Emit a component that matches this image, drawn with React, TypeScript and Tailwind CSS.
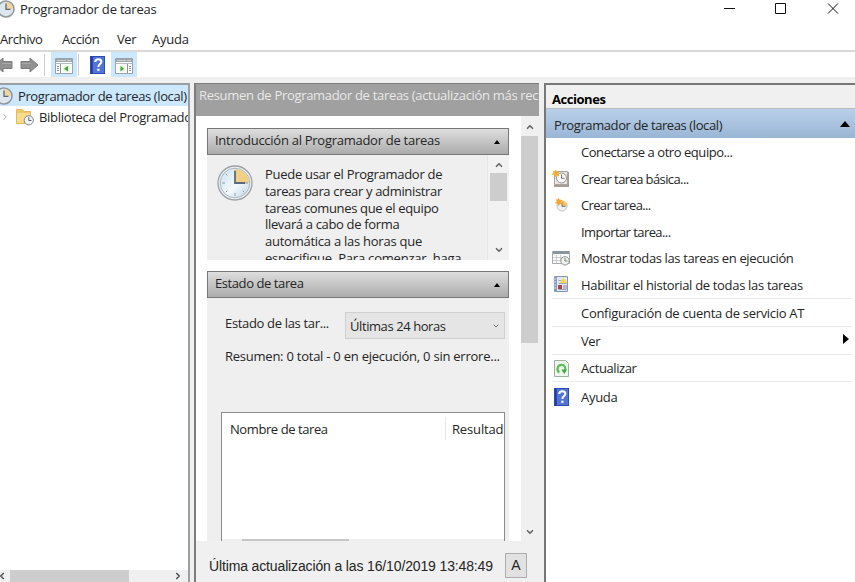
import type { ReactNode } from 'react';
import clsx from 'clsx';
import { ChevronDown, ChevronLeft, ChevronRight, ChevronUp } from 'lucide-react';

interface ActionItem {
  label: string;
  icon?: ReactNode;
  className: string;
  textClass: string;
  submenu?: boolean;
}

function ClockIcon({ className }: { className?: string }) {
  return (
    <svg viewBox="0 0 36 36" className={className}>
      <defs>
        <linearGradient id="face" x1="0" y1="0" x2="1" y2="1">
          <stop offset="0" stopColor="#c9dfef" />
          <stop offset="0.55" stopColor="#f4f9fc" />
          <stop offset="1" stopColor="#bdd2e2" />
        </linearGradient>
      </defs>
      <circle cx="18" cy="18" r="17" fill="#eef1f3" stroke="#9ba1a6" strokeWidth="1.3" />
      <circle cx="18" cy="18" r="14.8" fill="url(#face)" stroke="#a9b4bd" strokeWidth="1" />
      <path d="M18 18V4a14 14 0 0 1 14 14z" fill="#f1cf85" />
      <path d="M18 5v3M18 28v3M5 18h3M28 18h3M8.8 8.8l1.5 1.5M8.8 27.2l1.5-1.5M27.2 27.2l-1.5-1.5" stroke="#8b9daa" strokeWidth="1" />
      <path d="M18 6v12h10" fill="none" stroke="#5c6b7b" strokeWidth="1.8" />
    </svg>
  );
}

function SmallClock({ className }: { className?: string }) {
  return (
    <svg viewBox="0 0 18 18" className={className}>
      <circle cx="9" cy="9" r="8" fill="#dce7ef" stroke="#92989d" strokeWidth="1.6" />
      <path d="M9 9V2a7 7 0 0 1 7 7z" fill="#efd5a0" />
      <path d="M9 3.5V9.3h4.5" fill="none" stroke="#5d6872" strokeWidth="1.3" />
    </svg>
  );
}

function FolderClock() {
  return (
    <svg viewBox="0 0 18 18" className="h-[18px] w-[18px] shrink-0">
      <path d="M.5 1.5h6l1.5 2h6.5v12H.5z" fill="#efc964" stroke="#dfba60" />
      <path d="M1 5h13v10H1z" fill="#f8dc8b" />
      <circle cx="12.8" cy="12.3" r="4.6" fill="#eef3f6" stroke="#80888f" />
      <path d="M12.8 9.2v3.3h2.6" fill="none" stroke="#56616b" />
    </svg>
  );
}

function ArrowIcon({ flip }: { flip?: boolean }) {
  return (
    <svg viewBox="0 0 19 16" className={clsx('h-4 w-[19px] shrink-0', flip && '-scale-x-100')}>
      <path d="M1 4.5h9V1l8 7-8 7v-3.5H1z" fill="#919191" stroke="#7c7c7c" strokeWidth="1" />
      <path d="M2 6.5h9" stroke="#a8a8a8" />
    </svg>
  );
}

function PaneIcon({ right }: { right?: boolean }) {
  return (
    <svg viewBox="0 0 18 16" className="h-4 w-[18px]">
      <path d="M.5.5h17v15H.5z" fill="#fdfdfd" stroke="#9aa1a8" />
      <path d="M1 1h16v3H1z" fill="#9da5ad" />
      <path d="M2 2.5h9" stroke="#c9ced3" />
      <path d="M12.5 2.5h1M14.5 2.5h1" stroke="#fff" />
      <path d="M.5 5.5h17" stroke="#b5bbc1" />
      {right ? (
        <>
          <path d="M12.5 6v9" stroke="#8b939b" />
          <path d="M14 8.5h2M14 10.5h2M14 12.5h2" stroke="#8a929a" />
          <path d="M4.5 7.5h5v6h-5z" fill="#dff2d9" />
          <path d="m5.5 8 3.5 2.7-3.5 2.8z" fill="#45a53b" />
        </>
      ) : (
        <>
          <path d="M5.5 6v9" stroke="#8b939b" />
          <path d="M2 8.5h2M2 10.5h2M2 12.5h2" stroke="#8a929a" />
          <path d="M8.5 7.5h6v6h-6z" fill="#dff2d9" />
          <path d="M13 8 9 10.7l4 2.8z" fill="#45a53b" />
        </>
      )}
    </svg>
  );
}

function HelpIcon() {
  return (
    <svg viewBox="0 0 15 18" className="h-[18px] w-[15px]">
      <path d="M0 0h15v18H0z" fill="#2c4cb4" />
      <path d="M3 1h11v16H3z" fill="#5274d3" />
      <path d="M1.5 0v18" stroke="#223c98" />
      <path d="M5.2 5.9c0-3.7 6.2-3.5 6.2-.2 0 2.4-3 2.3-3 5.2" fill="none" stroke="#fff" strokeWidth="2" />
      <path d="M7.3 12.7h2.2v2.2H7.3z" fill="#fff" />
    </svg>
  );
}

function BasicTaskIcon() {
  return (
    <svg viewBox="0 0 18 18" className="h-[18px] w-[18px]">
      <path d="M2.5 1.5h13v13h-13z" fill="#eae6e5" stroke="#aaa4a2" />
      <path d="M2 15h13.5l.5-13h1v15H2z" fill="#a39c99" />
      <circle cx="9.5" cy="8" r="5" fill="#f7f7f7" stroke="#98938f" />
      <path d="M9.5 4.5V8.3h3" fill="none" stroke="#75716e" />
      <path d="m3.5 0 1.2 2 2.1-.3-1 2 1.2 2-2.5-.4L3 7l-.7-2L0 4.4l1.8-1.3L1.3 1l2 .6z" fill="#f6ad38" stroke="#f6ad38" strokeWidth=".6" />
    </svg>
  );
}

function TaskIcon() {
  return (
    <svg viewBox="0 0 13 14" className="h-[14px] w-[13px]">
      <circle cx="7" cy="8" r="5" fill="#eef1f3" stroke="#c4c6c8" />
      <path d="M7 8V2.5A5.4 5.4 0 0 1 12.4 8z" fill="#f4c568" />
      <path d="M7 4.5V8.4h3.5" fill="none" stroke="#7c7465" />
      <path d="m3.5.5 1 1.7 2-.2-.7 2 1 1.8-2.1-.2-1 1.9-.9-2L.7 5 2 3.6l-.5-2 2 .4z" fill="#f5a52a" stroke="#f5a52a" strokeWidth=".8" />
    </svg>
  );
}

function RunningIcon() {
  return (
    <svg viewBox="0 0 18 16" className="h-4 w-[18px]">
      <path d="M.5 1.5h17v12H.5z" fill="#fafafa" stroke="#a6abb0" />
      <path d="M1 1h16v3H1z" fill="#8d959c" />
      <path d="M1 7.5h12M1 10.5h9M4.5 5v8M8.5 5v6" stroke="#c9cdd1" />
      <circle cx="13" cy="10.8" r="4.2" fill="#eef1ec" stroke="#8f9692" />
      <path d="M13 8v3h2.4" fill="none" stroke="#6d836f" />
    </svg>
  );
}

function HistoryIcon() {
  return (
    <svg viewBox="0 0 16 17" className="h-[17px] w-4">
      <path d="M1.5.5h13v15h-13z" fill="#e3e8f0" stroke="#8796b3" />
      <path d="M1.5 1h2.5v15H1.5z" fill="#8a9dc0" />
      <path d="M5.5 4.5h3M5.5 7.5h8M5.5 13.5h8" stroke="#a3aab6" />
      <path d="M0 3h3M0 6h3M0 9h3M0 12h3" stroke="#d5dcea" />
      <path d="m10.5 1.5 3.5 5.5H7z" fill="#f6d742" />
      <path d="M5 9h4v4H5z" fill="#ad4450" />
      <path d="M10 9h4v4h-4z" fill="#b3bac8" />
    </svg>
  );
}

function RefreshIcon() {
  return (
    <svg viewBox="0 0 15 17" className="h-[17px] w-[15px]">
      <path d="M.5.5h11l3 3v13H.5z" fill="#eef7ec" stroke="#9fb09e" />
      <path d="M5.3 12.5C2 10 3.5 4.8 7.5 4.8c3.4 0 4.8 3.5 3.1 6" fill="none" stroke="#5abd5c" strokeWidth="2.2" />
      <path d="M7.3 9.5h5.6L10.3 14z" fill="#3ea844" />
    </svg>
  );
}

const actions: ActionItem[] = [
  { label: 'Conectarse a otro equipo...', className: 'h-[27px]', textClass: 'tracking-[-0.45px]' },
  { label: 'Crear tarea básica...', icon: <BasicTaskIcon />, className: 'h-[27px]', textClass: 'tracking-[-0.6px]' },
  { label: 'Crear tarea...', icon: <TaskIcon />, className: 'h-[26px]', textClass: 'tracking-[-0.65px]' },
  { label: 'Importar tarea...', className: 'h-[27px]', textClass: 'tracking-[-0.57px]' },
  { label: 'Mostrar todas las tareas en ejecución', icon: <RunningIcon />, className: 'h-[26px]', textClass: 'tracking-[-0.37px]' },
  { label: 'Habilitar el historial de todas las tareas', icon: <HistoryIcon />, className: 'h-7 border-b', textClass: 'tracking-[-0.32px]' },
  { label: 'Configuración de cuenta de servicio AT', className: 'h-7 border-b', textClass: 'tracking-[-0.3px]' },
  { label: 'Ver', className: 'h-7 border-b', textClass: 'tracking-[-0.4px]', submenu: true },
  { label: 'Actualizar', icon: <RefreshIcon />, className: 'h-[27px] border-b', textClass: 'tracking-[-0.4px]' },
  { label: 'Ayuda', icon: <HelpIcon />, className: 'h-[29px]', textClass: 'tracking-[-0.3px]' },
];

function SectionHeader({ title, titleClass }: { title: string; titleClass: string }) {
  return (
    <div className="flex h-[27px] shrink-0 items-center justify-between border border-[#777] bg-linear-to-b from-[#dedede] to-[#acacac] pr-2 pb-[3px] pl-[7px]">
      <span className={titleClass}>{title}</span>
      <svg viewBox="0 0 6 4" className="mt-1 h-1 w-1.5">
        <path d="M3 0l3 4H0z" />
      </svg>
    </div>
  );
}

function TreePane() {
  return (
    <aside className="flex w-[190px] shrink-0 flex-col border-t-2 border-r-2 border-[#9a9fa4] bg-white">
      <div className="flex h-[21px] items-center bg-[#cce8ff]">
        <SmallClock className="-ml-[5px] h-[18px] w-[18px] shrink-0" />
        <span className="ml-[5px] pt-px tracking-[-0.38px] whitespace-nowrap">Programador de tareas (local)</span>
      </div>
      <div className="flex h-[21px] items-center overflow-hidden">
        <ChevronRight className="h-2.5 w-2.5 shrink-0 text-gray-400" />
        <span className="ml-1.5"><FolderClock /></span>
        <span className="ml-[5px] tracking-[-0.3px] whitespace-nowrap">Biblioteca del Programador</span>
      </div>
      <div className="flex-1" />
      <div className="flex h-3 items-center bg-[#f0f0f0]">
        <ChevronLeft className="-ml-1.5 h-2.5 w-4 shrink-0 text-[#555]" strokeWidth={4} />
        <div className="h-full w-[119px] bg-[#cdcdcd]" />
        <ChevronRight className="ml-[42px] h-2.5 w-3.5 shrink-0 text-[#555]" strokeWidth={4} />
      </div>
    </aside>
  );
}

function SummaryPane() {
  return (
    <main className="ml-1 flex w-[345px] shrink-0 flex-col border-t border-l-2 border-[#7d7d7d] bg-[#f0f0f0]">
      <div className="h-8 shrink-0 overflow-hidden bg-[#a0a0a0] pt-[2px] pl-[3px] tracking-[-0.31px] whitespace-nowrap text-[#e8e8e8]">
        Resumen de Programador de tareas (actualización más rec
      </div>
      <div className="flex h-[425px] shrink-0 bg-white">
        <div className="flex w-[313px] flex-col pt-3 pl-[11px]">
          <SectionHeader title="Introducción al Programador de tareas" titleClass="tracking-[-0.27px]" />
          <div className="flex h-[105px] shrink-0 overflow-hidden bg-[#efefef]">
            <ClockIcon className="mt-[10px] ml-[10px] h-9 w-9 shrink-0" />
            <p className="mt-[11px] ml-3 w-[222px] shrink-0 leading-[16.8px] tracking-[-0.34px]">
              <span className="tracking-[-0.29px]">Puede usar el Programador de</span>
              <br />
              tareas para crear y administrar
              <br />
              tareas comunes que el equipo
              <br />
              llevará a cabo de forma
              <br />
              <span className="tracking-[-0.25px]">automática a las horas que</span>
              <br />
              <span className="tracking-[-0.21px]">especifique. Para comenzar, haga</span>
            </p>
            <div className="flex w-[22px] shrink-0 flex-col items-center border-l border-[#e6e6e6] bg-[#f2f2f2] pt-[5px] pb-[5px]">
              <ChevronUp className="h-2.5 w-2.5 shrink-0 text-[#666]" strokeWidth={4} />
              <div className="mt-[3px] h-7 w-[17px] bg-[#cdcdcd]" />
              <ChevronDown className="mt-auto h-2.5 w-2.5 shrink-0 text-[#666]" strokeWidth={4} />
            </div>
          </div>
          <div className="mt-[11px] flex flex-1 flex-col bg-[#efefef]">
            <SectionHeader title="Estado de tarea" titleClass="tracking-[-0.42px]" />
            <div className="mt-3.5 flex pl-[18px]">
              <span className="mt-[2px] w-[120px] tracking-[-0.33px]">Estado de las tar...</span>
              <div className="flex h-[27px] w-[160px] items-center justify-between border border-[#cfcfcf] bg-[#e5e5e5] pt-px pr-1 pl-1">
                <span className="tracking-[-0.42px]">Últimas 24 horas</span>
                <ChevronDown className="h-2 w-2 text-gray-500" strokeWidth={3} />
              </div>
            </div>
            <p className="mt-2 pl-[18px] tracking-[-0.24px] whitespace-nowrap">Resumen: 0 total - 0 en ejecución, 0 sin errore...</p>
            <div className="mt-auto ml-3.5 flex h-[129px] w-[284px] flex-col border-x border-t border-[#8c8c8c] bg-white">
              <div className="flex h-[27px] pt-1">
                <span className="w-[224px] border-r border-[#e5e5e5] pt-[3px] pl-2 tracking-[-0.42px]">Nombre de tarea</span>
                <span className="w-[58px] overflow-hidden pt-[3px] pl-1.5 tracking-[-0.15px]">Resultad</span>
              </div>
              <div className="mt-auto h-[2px] bg-[#efefef] pl-5">
                <div className="h-full w-[107px] bg-[#c6c6c6]" />
              </div>
            </div>
          </div>
        </div>
        <div className="ml-3 flex w-[18px] flex-col items-center bg-[#f0f0f0] pt-[6px] pr-px pb-1">
          <ChevronUp className="h-2.5 w-2.5 shrink-0 text-[#666]" strokeWidth={4} />
          <div className="mt-1 h-[207px] w-[17px] bg-[#cdcdcd]" />
          <ChevronDown className="mt-auto h-2.5 w-2.5 shrink-0 text-[#666]" strokeWidth={4} />
        </div>
      </div>
      <div className="flex flex-1 items-center pt-[7px] pl-[13px] font-['Liberation_Sans'] text-[14px] whitespace-nowrap">
        <span className="w-[296px] pt-[2px] tracking-[-0.14px]">Última actualización a las 16/10/2019 13:48:49</span>
        <span className="flex h-[25px] w-[22px] items-center justify-center border border-[#adadad] bg-[#e1e1e1]">A</span>
      </div>
    </main>
  );
}

function ActionsPane() {
  return (
    <aside className="ml-[5px] flex flex-1 flex-col border-t-2 border-l-2 border-[#777] bg-white">
      <h2 className="flex h-6 shrink-0 items-center border-b border-[#bbb] bg-[#f0f0f0] pt-1 pl-1.5 leading-4 font-bold tracking-[-0.45px] text-black">
        Acciones
      </h2>
      <div className="flex h-[29px] shrink-0 items-center justify-between bg-linear-to-b from-[#b9d0ea] to-[#9ab6d5] pr-[5px] pl-2">
        <span className="pt-[3px] tracking-[-0.4px]">Programador de tareas (local)</span>
        <svg viewBox="0 0 10 6" className="h-1.5 w-2.5">
          <path d="M5 0l5 6H0z" />
        </svg>
      </div>
      <ul className="pr-[3px] pl-1.5">
        {actions.map((item) => (
          <li key={item.label} className={clsx('flex items-center border-[#ececec]', item.className)}>
            <span className="flex w-[18px] justify-center">{item.icon}</span>
            <span className={clsx('ml-[11px] whitespace-nowrap', item.textClass)}>{item.label}</span>
            {item.submenu && (
              <svg viewBox="0 0 6 10" className="mr-[3px] mb-1 ml-auto h-2.5 w-1.5">
                <path d="M0 0l6 5-6 5z" />
              </svg>
            )}
          </li>
        ))}
      </ul>
    </aside>
  );
}

export default function App() {
  return (
    <div className="flex h-[582px] w-[855px] flex-col overflow-hidden bg-[#f0f0f0] font-['Open_Sans','Noto_Sans',sans-serif] text-[13px] leading-[18px] text-[#252525]">
      <header className="flex h-[26px] shrink-0 items-start bg-white">
        <SmallClock className="-ml-[3px] h-[18px] w-[18px]" />
        <span className="ml-[5px] tracking-[-0.2px]">Programador de tareas</span>
        <svg viewBox="0 0 116 12" className="mt-[3px] mr-4 ml-auto h-3 w-[116px]" fill="none" stroke="#111">
          <path d="M1 5.5h11M52.5.5h10v10h-10zM105 .5l10 10M115 .5l-10 10" />
        </svg>
      </header>
      <nav className="flex h-[26px] shrink-0 border-b-2 border-[#d9d9d9] bg-white pt-1 tracking-[-0.4px]">
        <span className="w-[62px]">Archivo</span>
        <span className="w-[55px]">Acción</span>
        <span className="w-[35px]">Ver</span>
        <span className="tracking-[-0.2px]">Ayuda</span>
      </nav>
      <div className="flex h-[25px] shrink-0 items-center bg-white">
        <span className="-ml-1.5"><ArrowIcon flip /></span>
        <span className="ml-[7px]"><ArrowIcon /></span>
        <span className="ml-[5px] h-[22px] w-px bg-[#ccc]" />
        <span className="ml-1.5 flex h-[25px] w-[26px] items-center justify-center bg-[#cce8ff] pt-[3px]"><PaneIcon /></span>
        <span className="ml-px h-[22px] w-px bg-[#ccc]" />
        <span className="ml-[11px]"><HelpIcon /></span>
        <span className="ml-1.5 flex h-[25px] w-[26px] items-center justify-center bg-[#cce8ff] pt-[3px]"><PaneIcon right /></span>
      </div>
      <div className="mt-[6px] flex min-h-0 flex-1">
        <TreePane />
        <SummaryPane />
        <ActionsPane />
      </div>
    </div>
  );
}
